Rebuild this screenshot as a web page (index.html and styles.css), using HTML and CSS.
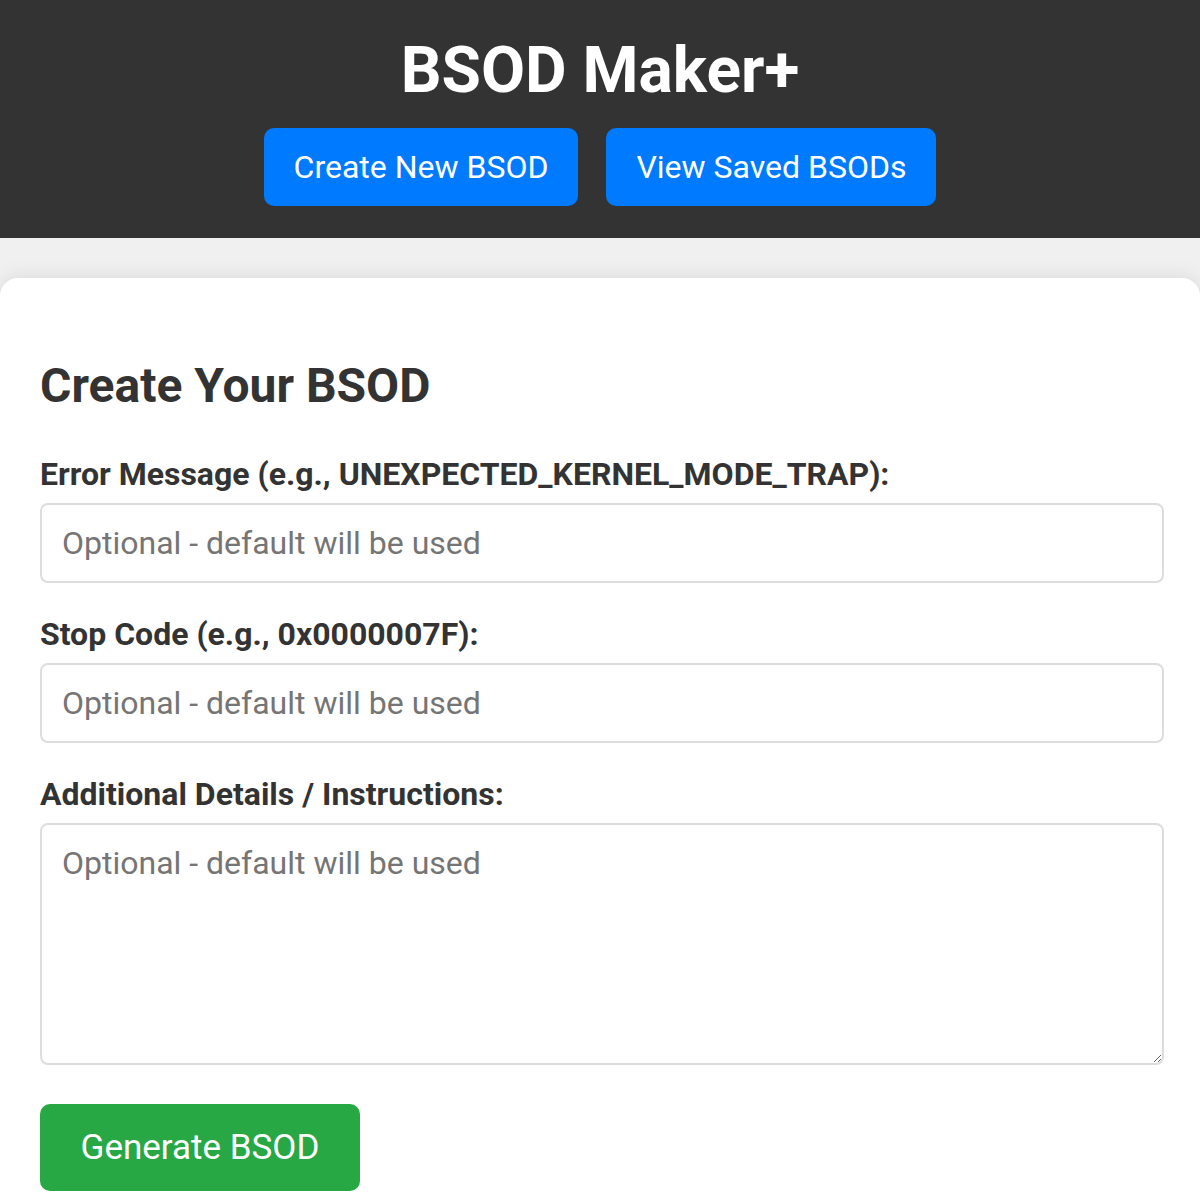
FILE: index.html
```html
<!DOCTYPE html>
<html lang="en">
<head>
<meta charset="utf-8">
<title>BSOD Maker+</title>
<link rel="stylesheet" href="styles.css">
</head>
<body>
<header class="site-header">
  <h1 class="site-title">BSOD Maker+</h1>
  <nav class="nav">
    <button class="nav-btn" type="button">Create New BSOD</button>
    <button class="nav-btn" type="button">View Saved BSODs</button>
  </nav>
</header>
<main class="card">
  <h2 class="card-title">Create Your BSOD</h2>
  <form class="form">
    <label class="field-label" for="msg">Error Message (e.g., UNEXPECTED_KERNEL_MODE_TRAP):</label>
    <input class="field-input" id="msg" type="text" placeholder="Optional - default will be used">
    <label class="field-label" for="code">Stop Code (e.g., 0x0000007F):</label>
    <input class="field-input" id="code" type="text" placeholder="Optional - default will be used">
    <label class="field-label" for="details">Additional Details / Instructions:</label>
    <textarea class="field-input field-area" id="details" placeholder="Optional - default will be used"></textarea>
    <button class="generate-btn" type="button">Generate BSOD</button>
  </form>
</main>
</body>
</html>
```
FILE: styles.css
```css
* { box-sizing: border-box; }
html, body { margin: 0; padding: 0; }
body {
  background: #f0f0f0;
  font-family: Roboto, "Liberation Sans", Arial, sans-serif;
  color: #333;
}
.site-header {
  background: #333;
  color: #fff;
  text-align: center;
  padding: 33px 20px 32px;
}
.site-title {
  margin: 0;
  font-size: 64px;
  line-height: 75px;
  font-weight: 700;
}
.nav {
  display: flex;
  justify-content: center;
  gap: 28px;
  margin-top: 20px;
}
.nav-btn {
  background: #007bff;
  color: #fff;
  border: none;
  border-radius: 10px;
  font-family: inherit;
  font-size: 32px;
  line-height: 38px;
  padding: 20px 30px;
}
.card {
  background: #fff;
  margin-top: 40px;
  border-radius: 18px 18px 0 0;
  box-shadow: 0 0 20px rgba(0,0,0,0.1);
  padding: 80px 36px 20px 40px;
}
.card-title {
  margin: 0 0 41px;
  font-size: 48px;
  line-height: 56px;
  font-weight: 700;
  color: #333;
}
.form { display: flex; flex-direction: column; align-items: flex-start; }
.field-label {
  font-size: 32px;
  line-height: 38px;
  font-weight: 700;
  margin-bottom: 10px;
}
.field-input {
  width: 100%;
  height: 80px;
  border: 2px solid #ddd;
  border-radius: 8px;
  padding: 20px;
  font-family: inherit;
  font-size: 32px;
  line-height: 36px;
  color: #333;
  margin-bottom: 32px;
}
.field-input::placeholder { color: #757575; }
.field-area {
  height: 242px;
  resize: vertical;
  margin-bottom: 39px;
}
.generate-btn {
  background: #28a745;
  color: #fff;
  border: none;
  border-radius: 10px;
  font-family: inherit;
  font-size: 35px;
  line-height: 41px;
  padding: 23px 40px;
  width: 320px;
}
```
